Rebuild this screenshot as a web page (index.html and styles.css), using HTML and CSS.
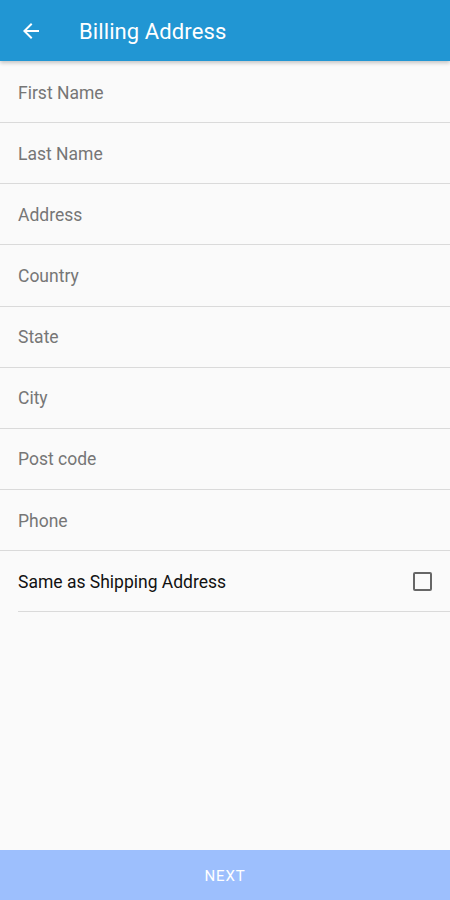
FILE: index.html
```html
<!DOCTYPE html>
<html>
<head>
<meta charset="utf-8">
<link rel="stylesheet" href="styles.css">
</head>
<body>
<div class="app">
  <header class="bar">
    <svg class="back" width="24" height="24" viewBox="0 0 24 24"><path d="M20 11H7.83l5.59-5.59L12 4l-8 8 8 8 1.41-1.41L7.83 13H20v-2z" fill="#fff"/></svg>
    <span class="title">Billing Address</span>
  </header>
  <main class="form">
    <div class="field">First Name</div>
    <div class="field">Last Name</div>
    <div class="field">Address</div>
    <div class="field">Country</div>
    <div class="field">State</div>
    <div class="field">City</div>
    <div class="field">Post code</div>
    <div class="field">Phone</div>
    <div class="check-row">
      <span class="check-label">Same as Shipping Address</span>
      <span class="box"></span>
    </div>
  </main>
  <footer class="next">NEXT</footer>
</div>
</body>
</html>
```
FILE: styles.css
```css
* { box-sizing: border-box; }
html, body { margin: 0; padding: 0; }
body { font-family: Roboto, "Noto Sans", sans-serif; background: #fafafa; }
.app { width: 450px; height: 900px; display: flex; flex-direction: column; background: #fafafa; }
.bar {
  height: 61px; flex: none; background: #2196d3; display: flex; align-items: center;
  padding-left: 19px; padding-top: 1px; box-shadow: 0 2px 4px rgba(0,0,0,0.22); position: relative; z-index: 1;
}
.back { display: block; }
.title { color: #fff; font-size: 22px; margin-left: 36px; letter-spacing: 0.1px; }
.form { flex: 1; display: flex; flex-direction: column; padding-top: 1px; }
.field {
  height: 61.15px; flex: none; border-bottom: 1px solid #dadada; display: flex; align-items: center;
  padding-left: 18px; padding-top: 1px; font-size: 17.5px; color: #767676;
}
.check-row {
  height: 61.15px; flex: none; margin-left: 18px; border-bottom: 1px solid #dadada; display: flex;
  align-items: center; justify-content: space-between; padding-right: 18px; padding-top: 1px;
}
.check-label { font-size: 17.5px; color: #111; }
.box { width: 19px; height: 19px; border: 2px solid #666; border-radius: 2px; }
.next {
  height: 50px; flex: none; background: #9dbffd; color: #fff; display: flex; align-items: center;
  justify-content: center; font-size: 15px; letter-spacing: 0.8px; padding-top: 1px;
}
```
